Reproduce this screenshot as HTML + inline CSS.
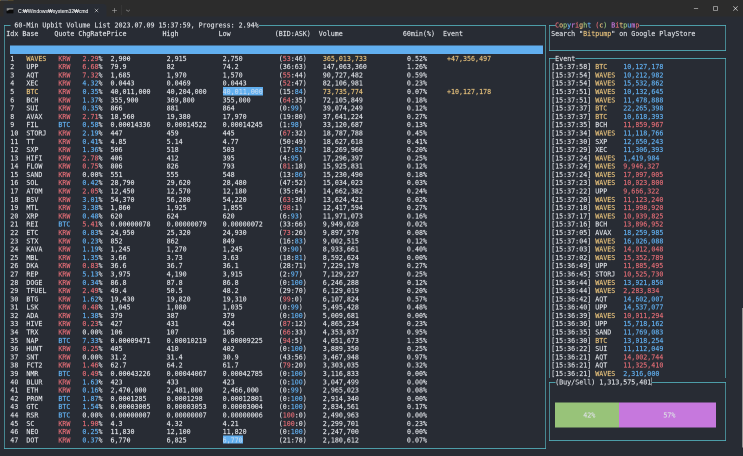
<!DOCTYPE html>
<html lang="en"><head><meta charset="utf-8"><title>cmd</title>
<style>

html,body{margin:0;padding:0;background:#282c34;}
body{width:743px;height:456px;overflow:hidden;position:relative;}
#root{position:absolute;left:0;top:0;width:1486.0px;height:912.0px;transform-origin:0 0;transform:scale(0.5);will-change:transform;overflow:hidden;background:#282c34;font-family:"DejaVu Sans Mono", "Liberation Mono", monospace;font-size:13.3px;font-weight:normal;color:#dcdfe4;-webkit-text-stroke:0.32px currentColor;}
.bx{position:absolute;}
#tt{position:absolute;left:36.00px;top:15.00px;font-family:"Liberation Sans","DejaVu Sans",sans-serif;font-size:10.00px;line-height:16.00px;color:#fff;white-space:pre;letter-spacing:0.00px;-webkit-text-stroke:0.10px #fff;}
.t{position:absolute;white-space:pre;height:17px;line-height:17px;letter-spacing:0.0067px;}
.r{color:#e06c75;} .g{color:#98c379;} .y{color:#e5c07b;} .b{color:#61afef;} .p{color:#c678dd;}
.h{color:#bcd6f0;} .bar{color:#dcdfe4;}
.l{position:absolute;background:#56b6c2;opacity:0.66;}
.lh{opacity:0.82;}

</style></head><body><div id="root">
<div class="bx" style="left:0.00px;top:0.00px;width:1486.00px;height:33.00px;background:#2c2c2c;"></div>
<div class="bx" style="left:0.00px;top:2.00px;width:7.00px;height:31.00px;background:#2e2c2a;"></div>
<div class="bx" style="left:0.00px;top:0.00px;width:2.40px;height:2.20px;background:#6b5d3e;"></div>
<div class="bx" style="left:2.40px;top:0.00px;width:13.60px;height:2.20px;background:#4a4a4a;"></div>
<div class="bx" style="left:16.00px;top:0.00px;width:11.00px;height:2.20px;background:#4f4630;"></div>
<div class="bx" style="left:6.80px;top:8.00px;width:206.00px;height:26.00px;background:#282c34;border-radius:6.40px 6.40px 0 0;"></div>
<svg class="bx" style="left:13.20px;top:15.80px" width="14.00" height="10.80" viewBox="0 0 7 5.4"><rect x="0" y="0" width="7" height="5.4" rx="0.5" fill="#0a0a0a"/><rect x="0.2" y="0.2" width="6.6" height="1.3" fill="#9a9a9a"/><path d="M0.2 1.5 L3.2 1.5 L1.2 2.6 L0.2 2.6 Z" fill="#8a8a8a"/></svg>
<div id="tt">C:&#8361;Windows&#8361;system32&#8361;cmd</div>
<svg class="bx" style="left:189.00px;top:17.00px" width="8.00" height="8.00" viewBox="0 0 4.0 4.0"><path d="M0.3 0.3 L3.7 3.7 M3.7 0.3 L0.3 3.7" stroke="#e6e6e6" stroke-width="0.5" fill="none"/></svg>
<svg class="bx" style="left:223.00px;top:15.00px" width="12.00" height="12.00" viewBox="0 0 6 6"><path d="M0.6 3 L5.4 3 M3 0.6 L3 5.4" stroke="#cfcfcf" stroke-width="0.45" fill="none"/></svg>
<div class="bx" style="left:242.50px;top:10.00px;width:1.00px;height:20.40px;background:#404040;"></div>
<svg class="bx" style="left:249.60px;top:14.50px" width="12.00" height="12.00" viewBox="0 0 6 6"><path d="M1.1 2.3 L3 4.1 L4.9 2.3" stroke="#cfcfcf" stroke-width="0.5" fill="none"/></svg>
<svg class="bx" style="left:1386.80px;top:12.00px" width="10.00" height="10.00" viewBox="0 0 5 5"><path d="M0.4 2.5 L4.6 2.5" stroke="#e6e6e6" stroke-width="0.55" fill="none"/></svg>
<svg class="bx" style="left:1425.80px;top:12.00px" width="10.00" height="10.00" viewBox="0 0 5 5"><rect x="0.4" y="0.4" width="4.2" height="4.2" rx="0.7" stroke="#e6e6e6" stroke-width="0.55" fill="none"/></svg>
<svg class="bx" style="left:1466.00px;top:12.00px" width="10.00" height="10.00" viewBox="0 0 5.0 5.0"><path d="M0.3 0.3 L4.7 4.7 M4.7 0.3 L0.3 4.7" stroke="#e6e6e6" stroke-width="0.55" fill="none"/></svg>
<div class="bx" style="left:1484.00px;top:616.00px;width:2.00px;height:279.00px;background:#929292;"></div>
<div class="bx" style="left:20.00px;top:91.00px;width:1066.00px;height:17.00px;background:#61afef;"></div>
<div class="bx" style="left:446.00px;top:174.00px;width:80.00px;height:17.00px;background:#61afef;"></div>
<div class="bx" style="left:446.00px;top:871.00px;width:40.00px;height:16.00px;background:#61afef;"></div>
<div class="bx" style="left:1110.00px;top:805.00px;width:128.00px;height:50.00px;background:#98c379;"></div>
<div class="bx" style="left:1238.00px;top:805.00px;width:194.00px;height:50.00px;background:#c678dd;"></div>
<div class="bx" style="left:1302.77px;top:755.28px;width:1.00px;height:15.39px;background:#dcdfe4;"></div>
<div class="l lh" style="left:8.00px;top:50.00px;width:13.03px;height:2.00px"></div>
<div class="l lh" style="left:517.90px;top:50.00px;width:574.10px;height:2.00px"></div>
<div class="l" style="left:8.00px;top:50.00px;width:2.00px;height:848.00px"></div>
<div class="l" style="left:1090.00px;top:50.00px;width:2.00px;height:848.00px"></div>
<div class="l lh" style="left:8.00px;top:896.00px;width:1084.00px;height:2.00px"></div>
<div class="l lh" style="left:1098.00px;top:50.00px;width:12.93px;height:2.00px"></div>
<div class="l lh" style="left:1279.23px;top:50.00px;width:172.77px;height:2.00px"></div>
<div class="l" style="left:1098.00px;top:50.00px;width:2.00px;height:52.00px"></div>
<div class="l" style="left:1450.00px;top:50.00px;width:2.00px;height:52.00px"></div>
<div class="l lh" style="left:1098.00px;top:100.00px;width:354.00px;height:2.00px"></div>
<div class="l lh" style="left:1098.00px;top:116.00px;width:12.93px;height:2.00px"></div>
<div class="l lh" style="left:1151.00px;top:116.00px;width:301.00px;height:2.00px"></div>
<div class="l" style="left:1098.00px;top:116.00px;width:2.00px;height:639.98px"></div>
<div class="l" style="left:1450.00px;top:116.00px;width:2.00px;height:639.98px"></div>
<div class="l lh" style="left:1098.00px;top:764.00px;width:12.93px;height:2.00px"></div>
<div class="l lh" style="left:1303.27px;top:764.00px;width:148.73px;height:2.00px"></div>
<div class="l" style="left:1098.00px;top:764.00px;width:2.00px;height:118.00px"></div>
<div class="l" style="left:1450.00px;top:764.00px;width:2.00px;height:118.00px"></div>
<div class="l lh" style="left:1098.00px;top:880.00px;width:354.00px;height:2.00px"></div>
<div class="t" style="left:4.60px;top:42px">   60-Min Upbit Volume List 2023.07.09 15:37:59, Progress: 2.94%                                                                          <span class="r">C</span><span class="y">o</span><span class="g">p</span><span class="b">y</span><span class="p">r</span><span class="r">i</span><span class="y">g</span><span class="g">h</span><span class="b">t</span> <span class="r">(</span><span class="y">c</span><span class="g">)</span> <span class="p">B</span><span class="r">i</span><span class="y">t</span><span class="g">p</span><span class="b">u</span><span class="p">m</span><span class="r">p</span></div>
<div class="t" style="left:4.60px;top:59px"> Idx Base    Quote ChgRatePrice         High          Low           (BID:ASK)  Volume               60min(%)  Event                      Search "<span class="y">Bitpump</span>" on Google PlayStore</div>
<div class="t" style="left:4.60px;top:109px">  1   <span class="y">WAVES</span>   <span class="r">KRW</span>   <span class="r">2.29</span>%  2,900         2,915         2,750         (<span class="r">53</span>:46)    <span class="y">365,013,733</span>          0.52%     <span class="y">+47,356,497</span>                Event</div>
<div class="t" style="left:4.60px;top:125px">  2   UPP     <span class="r">KRW</span>   <span class="r">6.68</span>%  79.9          82            74.2          (36:63)    147,063,360          1.26%                               [15:37:58] <span class="y">BTC</span>    <span class="b">10,127,178</span></div>
<div class="t" style="left:4.60px;top:142px">  3   AQT     <span class="r">KRW</span>   <span class="r">7.32</span>%  1,685         1,970         1,570         (<span class="r">55</span>:44)    90,727,482           0.59%                               [15:37:54] <span class="y">WAVES</span>  <span class="b">10,212,982</span></div>
<div class="t" style="left:4.60px;top:158px">  4   XEC     <span class="r">KRW</span>   <span class="b">4.32</span>%  0.0443        0.0469        0.0443        (<span class="r">52</span>:47)    82,106,981           0.23%                               [15:37:54] <span class="y">WAVES</span>  <span class="b">15,532,862</span></div>
<div class="t" style="left:4.60px;top:175px">  5   <span class="y">BTC</span>     <span class="r">KRW</span>   <span class="b">0.35</span>%  40,011,000    40,204,000    <span class="h">40,011,000</span>    (15:<span class="b">84</span>)    <span class="y">73,735,774</span>           0.07%     <span class="y">+10,127,178</span>               [15:37:51] <span class="y">WAVES</span>  <span class="b">10,132,645</span></div>
<div class="t" style="left:4.60px;top:192px">  6   BCH     <span class="r">KRW</span>   <span class="b">1.37</span>%  355,900       369,800       355,000       (<span class="r">64</span>:35)    72,105,849           0.18%                               [15:37:51] <span class="y">WAVES</span>  <span class="b">11,478,888</span></div>
<div class="t" style="left:4.60px;top:208px">  7   SUI     <span class="r">KRW</span>   <span class="b">0.35</span>%  866           881           864           (0:<span class="b">99</span>)     39,074,249           0.12%                               [15:37:37] <span class="y">BTC</span>    <span class="b">22,265,398</span></div>
<div class="t" style="left:4.60px;top:225px">  8   AVAX    <span class="r">KRW</span>   <span class="r">2.71</span>%  18,560        19,380        17,970        (19:80)    37,641,224           0.27%                               [15:37:37] <span class="y">BTC</span>    <span class="b">10,618,393</span></div>
<div class="t" style="left:4.60px;top:241px">  9   FIL     <span class="b">BTC</span>   <span class="b">0.58</span>%  0.00014336    0.00014522    0.00014245    (1:<span class="b">98</span>)     33,120,687           0.13%                               [15:37:35] BCH    <span class="r">11,859,967</span></div>
<div class="t" style="left:4.60px;top:258px">  10  STORJ   <span class="r">KRW</span>   <span class="b">2.19</span>%  447           459           445           (<span class="r">67</span>:32)    18,787,788           0.45%                               [15:37:34] <span class="y">WAVES</span>  <span class="b">11,118,766</span></div>
<div class="t" style="left:4.60px;top:275px">  11  TT      <span class="r">KRW</span>   <span class="b">0.41</span>%  4.85          5.14          4.77          (50:49)    18,627,618           0.41%                               [15:37:30] SXP    <span class="b">12,650,243</span></div>
<div class="t" style="left:4.60px;top:291px">  12  SXP     <span class="r">KRW</span>   <span class="b">1.36</span>%  506           518           503           (17:<span class="b">82</span>)    18,269,960           0.20%                               [15:37:29] XEC    <span class="b">11,306,393</span></div>
<div class="t" style="left:4.60px;top:308px">  13  HIFI    <span class="r">KRW</span>   <span class="r">2.78</span>%  406           412           395           (4:<span class="b">95</span>)     17,296,397           0.25%                               [15:37:24] <span class="y">WAVES</span>  <span class="b">1,419,984</span></div>
<div class="t" style="left:4.60px;top:324px">  14  FLOW    <span class="r">KRW</span>   <span class="r">0.75</span>%  806           826           793           (<span class="r">81</span>:18)    15,925,831           0.12%                               [15:37:24] <span class="y">WAVES</span>  <span class="r">9,946,327</span></div>
<div class="t" style="left:4.60px;top:341px">  15  SAND    <span class="r">KRW</span>   0.00%  551           555           548           (13:<span class="b">86</span>)    15,230,490           0.18%                               [15:37:24] <span class="y">WAVES</span>  <span class="r">17,097,005</span></div>
<div class="t" style="left:4.60px;top:357px">  16  SOL     <span class="r">KRW</span>   <span class="b">0.42</span>%  28,790        29,620        28,480        (47:52)    15,034,023           0.03%                               [15:37:23] <span class="y">WAVES</span>  <span class="r">10,023,800</span></div>
<div class="t" style="left:4.60px;top:374px">  17  ATOM    <span class="r">KRW</span>   <span class="r">2.05</span>%  12,450        12,570        12,180        (35:64)    14,662,382           0.24%                               [15:37:22] UPP    <span class="r">9,666,322</span></div>
<div class="t" style="left:4.60px;top:391px">  18  BSV     <span class="r">KRW</span>   <span class="b">3.01</span>%  54,370        56,200        54,220        (<span class="r">63</span>:36)    13,624,421           0.02%                               [15:37:20] <span class="y">WAVES</span>  <span class="r">11,123,240</span></div>
<div class="t" style="left:4.60px;top:407px">  19  MTL     <span class="r">KRW</span>   <span class="b">3.38</span>%  1,860         1,925         1,855         (<span class="r">98</span>:1)     12,417,594           0.27%                               [15:37:18] <span class="y">WAVES</span>  <span class="r">11,998,920</span></div>
<div class="t" style="left:4.60px;top:424px">  20  XRP     <span class="r">KRW</span>   <span class="b">0.48</span>%  620           624           620           (6:<span class="b">93</span>)     11,971,073           0.16%                               [15:37:17] <span class="y">WAVES</span>  <span class="r">10,939,825</span></div>
<div class="t" style="left:4.60px;top:440px">  21  REI     <span class="b">BTC</span>   <span class="r">5.41</span>%  0.00000078    0.00000079    0.00000072    (33:66)    9,949,028            0.02%                               [15:37:16] BCH    <span class="r">13,896,952</span></div>
<div class="t" style="left:4.60px;top:457px">  22  ETC     <span class="r">KRW</span>   <span class="b">0.83</span>%  24,950        25,320        24,930        (<span class="r">73</span>:26)    9,897,570            0.08%                               [15:37:05] AVAX   <span class="b">18,259,985</span></div>
<div class="t" style="left:4.60px;top:474px">  23  STX     <span class="r">KRW</span>   <span class="b">0.23</span>%  852           862           849           (16:<span class="b">83</span>)    9,002,515            0.12%                               [15:37:04] <span class="y">WAVES</span>  <span class="b">16,026,088</span></div>
<div class="t" style="left:4.60px;top:490px">  24  KAVA    <span class="r">KRW</span>   <span class="b">1.19</span>%  1,245         1,270         1,245         (9:<span class="b">90</span>)     8,933,661            0.40%                               [15:37:03] <span class="y">WAVES</span>  <span class="r">14,012,048</span></div>
<div class="t" style="left:4.60px;top:507px">  25  MBL     <span class="r">KRW</span>   <span class="b">1.35</span>%  3.66          3.73          3.63          (18:<span class="b">81</span>)    8,592,624            0.00%                               [15:37:02] <span class="y">WAVES</span>  <span class="r">15,352,789</span></div>
<div class="t" style="left:4.60px;top:523px">  26  DKA     <span class="r">KRW</span>   <span class="r">0.83</span>%  36.6          36.7          36.1          (28:71)    7,229,178            0.27%                               [15:36:49] UPP    <span class="r">11,885,495</span></div>
<div class="t" style="left:4.60px;top:540px">  27  REP     <span class="r">KRW</span>   <span class="b">5.13</span>%  3,975         4,190         3,915         (2:<span class="b">97</span>)     7,129,227            0.25%                               [15:36:45] STORJ  <span class="r">10,525,730</span></div>
<div class="t" style="left:4.60px;top:557px">  28  DOGE    <span class="r">KRW</span>   <span class="b">0.34</span>%  86.8          87.8          86.8          (0:<span class="b">100</span>)    6,246,288            0.12%                               [15:36:44] <span class="y">WAVES</span>  <span class="b">13,921,850</span></div>
<div class="t" style="left:4.60px;top:573px">  29  TFUEL   <span class="r">KRW</span>   <span class="r">2.49</span>%  49.4          50.5          48.2          (29:70)    6,129,019            0.20%                               [15:36:44] <span class="y">WAVES</span>  <span class="r">2,283,834</span></div>
<div class="t" style="left:4.60px;top:590px">  30  BTG     <span class="r">KRW</span>   <span class="b">1.62</span>%  19,430        19,820        19,310        (<span class="r">99</span>:0)     6,107,824            0.57%                               [15:36:42] AQT    <span class="b">14,602,007</span></div>
<div class="t" style="left:4.60px;top:606px">  31  LSK     <span class="r">KRW</span>   <span class="r">0.48</span>%  1,045         1,080         1,035         (0:<span class="b">99</span>)     5,495,428            0.48%                               [15:36:40] UPP    <span class="b">14,537,077</span></div>
<div class="t" style="left:4.60px;top:623px">  32  ADA     <span class="r">KRW</span>   <span class="b">1.38</span>%  379           387           379           (0:<span class="b">100</span>)    5,009,681            0.00%                               [15:36:39] <span class="y">WAVES</span>  <span class="r">10,011,294</span></div>
<div class="t" style="left:4.60px;top:639px">  33  HIVE    <span class="r">KRW</span>   <span class="r">0.23</span>%  427           431           424           (<span class="r">87</span>:12)    4,865,234            0.23%                               [15:36:36] UPP    <span class="b">15,718,162</span></div>
<div class="t" style="left:4.60px;top:656px">  34  TRX     <span class="r">KRW</span>   0.00%  106           107           105           (<span class="r">66</span>:33)    4,353,837            0.95%                               [15:36:35] SAND   <span class="b">11,769,083</span></div>
<div class="t" style="left:4.60px;top:673px">  35  NAP     <span class="b">BTC</span>   <span class="b">7.33</span>%  0.00009471    0.00010219    0.00009225    (<span class="r">94</span>:5)     4,051,673            1.35%                               [15:36:30] <span class="y">BTC</span>    <span class="b">13,018,254</span></div>
<div class="t" style="left:4.60px;top:689px">  36  HUNT    <span class="r">KRW</span>   <span class="r">0.25</span>%  405           410           402           (0:<span class="b">100</span>)    3,889,350            0.25%                               [15:36:22] SUI    <span class="b">11,112,049</span></div>
<div class="t" style="left:4.60px;top:706px">  37  SNT     <span class="r">KRW</span>   0.00%  31.2          31.4          30.9          (43:56)    3,467,948            0.97%                               [15:36:21] AQT    <span class="r">14,002,744</span></div>
<div class="t" style="left:4.60px;top:722px">  38  FCT2    <span class="r">KRW</span>   <span class="r">1.46</span>%  62.7          64.2          61.7          (<span class="r">79</span>:20)    3,303,035            0.32%                               [15:36:21] AQT    <span class="r">11,325,410</span></div>
<div class="t" style="left:4.60px;top:739px">  39  NMR     <span class="b">BTC</span>   <span class="r">0.49</span>%  0.00043226    0.00044067    0.00042785    (0:<span class="b">100</span>)    3,116,833            0.00%                               [15:36:21] <span class="y">WAVES</span>  <span class="b">2,316,000</span></div>
<div class="t" style="left:4.60px;top:756px">  40  BLUR    <span class="r">KRW</span>   <span class="b">1.63</span>%  423           433           423           (0:<span class="b">100</span>)    3,047,499            0.00%                                (Buy/Sell) 1,313,575,481</div>
<div class="t" style="left:4.60px;top:772px">  41  ETH     <span class="r">KRW</span>   <span class="b">0.16</span>%  2,470,000     2,481,000     2,466,000     (0:<span class="b">99</span>)     2,965,023            0.08%</div>
<div class="t" style="left:4.60px;top:789px">  42  PROM    <span class="b">BTC</span>   <span class="b">1.87</span>%  0.0001285     0.0001298     0.00012801    (0:<span class="b">100</span>)    2,914,340            0.00%</div>
<div class="t" style="left:4.60px;top:805px">  43  GTC     <span class="b">BTC</span>   <span class="b">1.54</span>%  0.00003005    0.00003053    0.00003004    (0:<span class="b">100</span>)    2,834,561            0.17%</div>
<div class="t" style="left:4.60px;top:822px">  44  RSR     <span class="b">BTC</span>   0.00%  0.00000007    0.00000007    0.00000006    (<span class="r">100</span>:0)    2,490,963            0.00%                                       <span class="bar">42%</span>                 <span class="bar">57%</span></div>
<div class="t" style="left:4.60px;top:839px">  45  SC      <span class="r">KRW</span>   <span class="r">1.90</span>%  4.3           4.32          4.21          (<span class="r">100</span>:0)    2,299,701            0.23%</div>
<div class="t" style="left:4.60px;top:855px">  46  NEO     <span class="r">KRW</span>   <span class="b">0.25</span>%  11,830        12,100        11,820        (0:<span class="b">100</span>)    2,247,700            0.00%</div>
<div class="t" style="left:4.60px;top:872px">  47  DOT     <span class="r">KRW</span>   <span class="b">0.37</span>%  6,770         6,825         <span class="h">6,770</span>         (21:78)    2,180,612            0.07%</div>
</div>
</div></body></html>
